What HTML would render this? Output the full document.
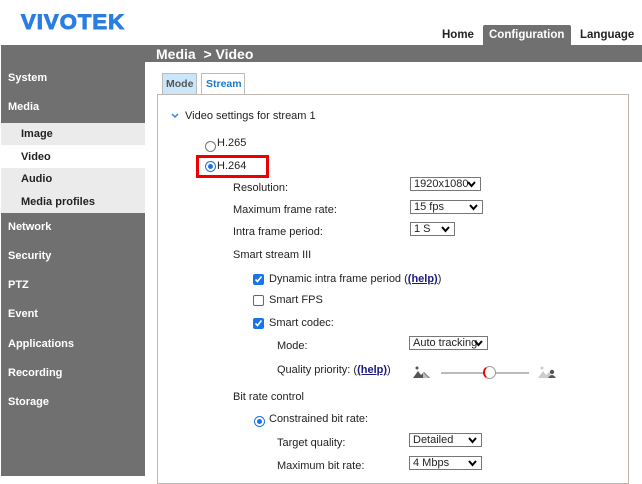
<!DOCTYPE html>
<html><head><meta charset="utf-8"><style>
*{margin:0;padding:0;box-sizing:border-box}
body{width:642px;height:476px;overflow:hidden;background:#fff;font-family:"Liberation Sans",Arial,sans-serif;font-size:11px;color:#222;position:relative}
.a{position:absolute;white-space:nowrap}
.logo{left:21px;top:11px;font-size:21px;font-weight:bold;color:#2a7de1;letter-spacing:1px;-webkit-text-stroke:1px #2a7de1;transform:scaleX(1.05);transform-origin:left}
.nav{font-size:11.5px;font-weight:bold;color:#222}
.bar{left:1px;top:45px;width:641px;height:17px;background:#707070}
.side{left:1px;top:62px;width:144px;height:414px;background:#707070}
.m{left:8px;color:#fff;font-weight:bold;font-size:11px}
.sub{left:1px;width:144px;height:23px;background:#ebebeb}
.s{left:21px;font-weight:bold;font-size:11px;color:#222}
.sel{border:1px solid #777;height:14px;font-size:11px;line-height:12px;padding-left:3px;background:#fff;overflow:hidden}
.sel svg{position:absolute;right:4px;top:3px}
.cb{width:11px;height:11px;border-radius:2px}
.on{background:#1a73e8}
.off{border:1px solid #666;background:#fff}
a{color:#1a1a80;font-weight:bold;text-decoration:underline}
</style></head><body>
<div class="a logo">VIVOTEK</div>
<div class="a nav" style="left:442px;top:29px">Home</div>
<div class="a" style="left:483px;top:25px;width:88px;height:20px;background:#707070;border-radius:2px 2px 0 0"></div>
<div class="a nav" style="left:489px;top:29px;color:#fff">Configuration</div>
<div class="a nav" style="left:580px;top:29px">Language</div>
<div class="a bar"></div>
<div class="a" style="left:156px;top:46px;color:#fff;font-weight:bold;font-size:14px">Media&nbsp; &gt; Video</div>
<div class="a side"></div>
<div class="a m" style="top:72px">System</div>
<div class="a m" style="top:101px">Media</div>
<div class="a sub" style="top:123px"></div>
<div class="a" style="left:1px;top:145px;width:144px;height:23px;background:#fff"></div>
<div class="a sub" style="top:168px;height:45px"></div>
<div class="a s" style="top:128px">Image</div>
<div class="a s" style="top:151px">Video</div>
<div class="a s" style="top:173px">Audio</div>
<div class="a s" style="top:196px">Media profiles</div>
<div class="a m" style="top:221px">Network</div>
<div class="a m" style="top:250px">Security</div>
<div class="a m" style="top:279px">PTZ</div>
<div class="a m" style="top:308px">Event</div>
<div class="a m" style="top:338px">Applications</div>
<div class="a m" style="top:367px">Recording</div>
<div class="a m" style="top:396px">Storage</div>

<div class="a" style="left:162px;top:73px;width:35px;height:22px;background:#c9e7f9;border:1px solid #bbb;border-bottom:none"></div>
<div class="a" style="left:166px;top:78px;color:#555;font-weight:bold;font-size:10.5px">Mode</div>
<div class="a" style="left:201px;top:73px;width:44px;height:22px;background:#fff;border:1px solid #bbb;border-bottom:none"></div>
<div class="a" style="left:206px;top:78px;color:#1a7bc9;font-weight:bold;font-size:10.5px">Stream</div>
<div class="a" style="left:157px;top:94px;width:472px;height:390px;border:1px solid #c0b8b0"></div>

<svg class="a" style="left:171px;top:113px" width="8" height="6"><path d="M1 1l3 3 3-3" stroke="#2a7de1" stroke-width="1.4" fill="none"/></svg>
<div class="a" style="left:185px;top:110px">Video settings for stream 1</div>
<div class="a" style="left:205px;top:141px;width:11px;height:11px;border:1px solid #777;border-radius:50%"></div>
<div class="a" style="left:217px;top:137px">H.265</div>
<div class="a" style="left:196px;top:155px;width:73px;height:23px;border:3px solid #e00"></div>
<div class="a" style="left:205px;top:161px;width:11px;height:11px;border:1.5px solid #1a73e8;border-radius:50%;background:#fff"><div style="margin:1.5px;width:5px;height:5px;border-radius:50%;background:#1a73e8"></div></div>
<div class="a" style="left:217px;top:160px">H.264</div>

<div class="a" style="left:233px;top:182px">Resolution:</div>
<div class="a sel" style="left:410px;top:177px;width:71px">1920x1080<svg width="9" height="7"><path d="M1 1l3.5 4 3.5-4" stroke="#000" stroke-width="2" fill="none"/></svg></div>
<div class="a" style="left:233px;top:204px">Maximum frame rate:</div>
<div class="a sel" style="left:410px;top:200px;width:73px">15 fps<svg width="9" height="7"><path d="M1 1l3.5 4 3.5-4" stroke="#000" stroke-width="2" fill="none"/></svg></div>
<div class="a" style="left:233px;top:226px">Intra frame period:</div>
<div class="a sel" style="left:410px;top:222px;width:45px">1 S<svg width="9" height="7"><path d="M1 1l3.5 4 3.5-4" stroke="#000" stroke-width="2" fill="none"/></svg></div>
<div class="a" style="left:233px;top:249px">Smart stream III</div>

<div class="a cb on" style="left:253px;top:274px"><svg width="11" height="11"><path d="M2.5 5.5l2 2 4-5" stroke="#fff" stroke-width="1.6" fill="none"/></svg></div>
<div class="a" style="left:269px;top:273px">Dynamic intra frame period (<a>(help)</a>)</div>
<div class="a cb off" style="left:253px;top:295px"></div>
<div class="a" style="left:269px;top:294px">Smart FPS</div>
<div class="a cb on" style="left:253px;top:318px"><svg width="11" height="11"><path d="M2.5 5.5l2 2 4-5" stroke="#fff" stroke-width="1.6" fill="none"/></svg></div>
<div class="a" style="left:269px;top:317px">Smart codec:</div>

<div class="a" style="left:277px;top:340px">Mode:</div>
<div class="a sel" style="left:409px;top:336px;width:79px">Auto tracking<svg width="9" height="7"><path d="M1 1l3.5 4 3.5-4" stroke="#000" stroke-width="2" fill="none"/></svg></div>
<div class="a" style="left:277px;top:364px">Quality priority: (<a>(help)</a>)</div>
<svg class="a" style="left:412px;top:365px" width="20" height="14"><path d="M1 13l5-7 3 4 3-3 6 6z" fill="#555"/><circle cx="5" cy="3" r="1.5" fill="#555"/><path d="M11 7l6 6h-6z" fill="#bbb"/></svg>
<div class="a" style="left:441px;top:372px;width:88px;height:2px;background:#bbb"></div>
<div class="a" style="left:483px;top:366px;width:13px;height:13px;border-radius:50%;background:#fff;border:1px solid #999;border-left:2px solid #e00"></div>
<svg class="a" style="left:537px;top:365px" width="20" height="14"><path d="M1 13l5-7 3 4 3-3 4 6z" fill="#ccc"/><circle cx="5" cy="3" r="1.5" fill="#ccc"/><circle cx="15" cy="7" r="2.2" fill="#555"/><path d="M11 13q4-6 8 0z" fill="#555"/></svg>

<div class="a" style="left:233px;top:391px">Bit rate control</div>
<div class="a" style="left:254px;top:416px;width:11px;height:11px;border:1.5px solid #1a73e8;border-radius:50%"><div style="margin:1.5px;width:5px;height:5px;border-radius:50%;background:#1a73e8"></div></div>
<div class="a" style="left:269px;top:413px">Constrained bit rate:</div>
<div class="a" style="left:277px;top:437px">Target quality:</div>
<div class="a sel" style="left:409px;top:433px;width:73px">Detailed<svg width="9" height="7"><path d="M1 1l3.5 4 3.5-4" stroke="#000" stroke-width="2" fill="none"/></svg></div>
<div class="a" style="left:277px;top:460px">Maximum bit rate:</div>
<div class="a sel" style="left:409px;top:456px;width:73px">4 Mbps<svg width="9" height="7"><path d="M1 1l3.5 4 3.5-4" stroke="#000" stroke-width="2" fill="none"/></svg></div>
</body></html>
